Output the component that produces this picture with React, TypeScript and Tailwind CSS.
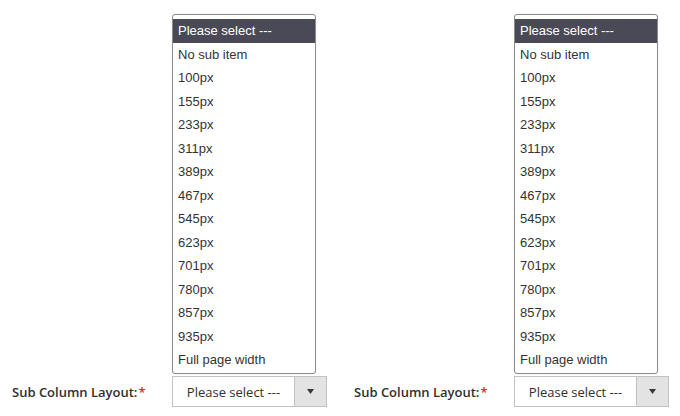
import React from 'react';

const options = [
  'No sub item',
  '100px',
  '155px',
  '233px',
  '311px',
  '389px',
  '467px',
  '545px',
  '623px',
  '701px',
  '780px',
  '857px',
  '935px',
  'Full page width',
];

function LayoutSelect() {
  return (
    <div className="w-[342px] shrink-0 pl-3 flex flex-col">
      <div className="ml-[160px] w-[144px] h-[360px] border border-[#8a8a8a] rounded-[3px] bg-white pt-[4px] pb-[1px] shadow-[0_0_2px_rgba(0,0,0,0.08)] font-['Liberation_Sans',Arial,sans-serif] text-[13px] text-[#333]">
        <div className="h-[23.5px] flex items-center px-[5px] bg-[#4a4a56] text-white">Please select ---</div>
        {options.map((opt) => (
          <div key={opt} className="h-[23.5px] flex items-center px-[5px]">
            {opt}
          </div>
        ))}
      </div>
      <div className="flex items-center mt-[2px] h-[31px]">
        <label className="w-[160px] pt-[3px] font-['Open_Sans',sans-serif] font-semibold text-[13px] text-[#303030]">
          Sub Column Layout:<span className="text-[#e02b27] ml-[1px] align-top text-[13px]">*</span>
        </label>
        <div className="flex w-[155px] h-[31px] border border-[#c2c2c2] bg-white font-['Open_Sans',sans-serif] text-[13px] text-[#303030]">
          <div className="flex-1 flex items-center justify-center pt-[2px]">Please select ---</div>
          <div className="w-[32px] flex items-center justify-center bg-[#e3e3e3] border-l border-[#c2c2c2]">
            <svg width="7" height="5" viewBox="0 0 7 5">
              <path d="M0 0h7L3.5 5z" fill="#41362f" />
            </svg>
          </div>
        </div>
      </div>
    </div>
  );
}

export default function App() {
  return (
    <div className="w-[680px] h-[416px] bg-white pt-[14px] flex overflow-hidden">
      <LayoutSelect />
      <LayoutSelect />
    </div>
  );
}
